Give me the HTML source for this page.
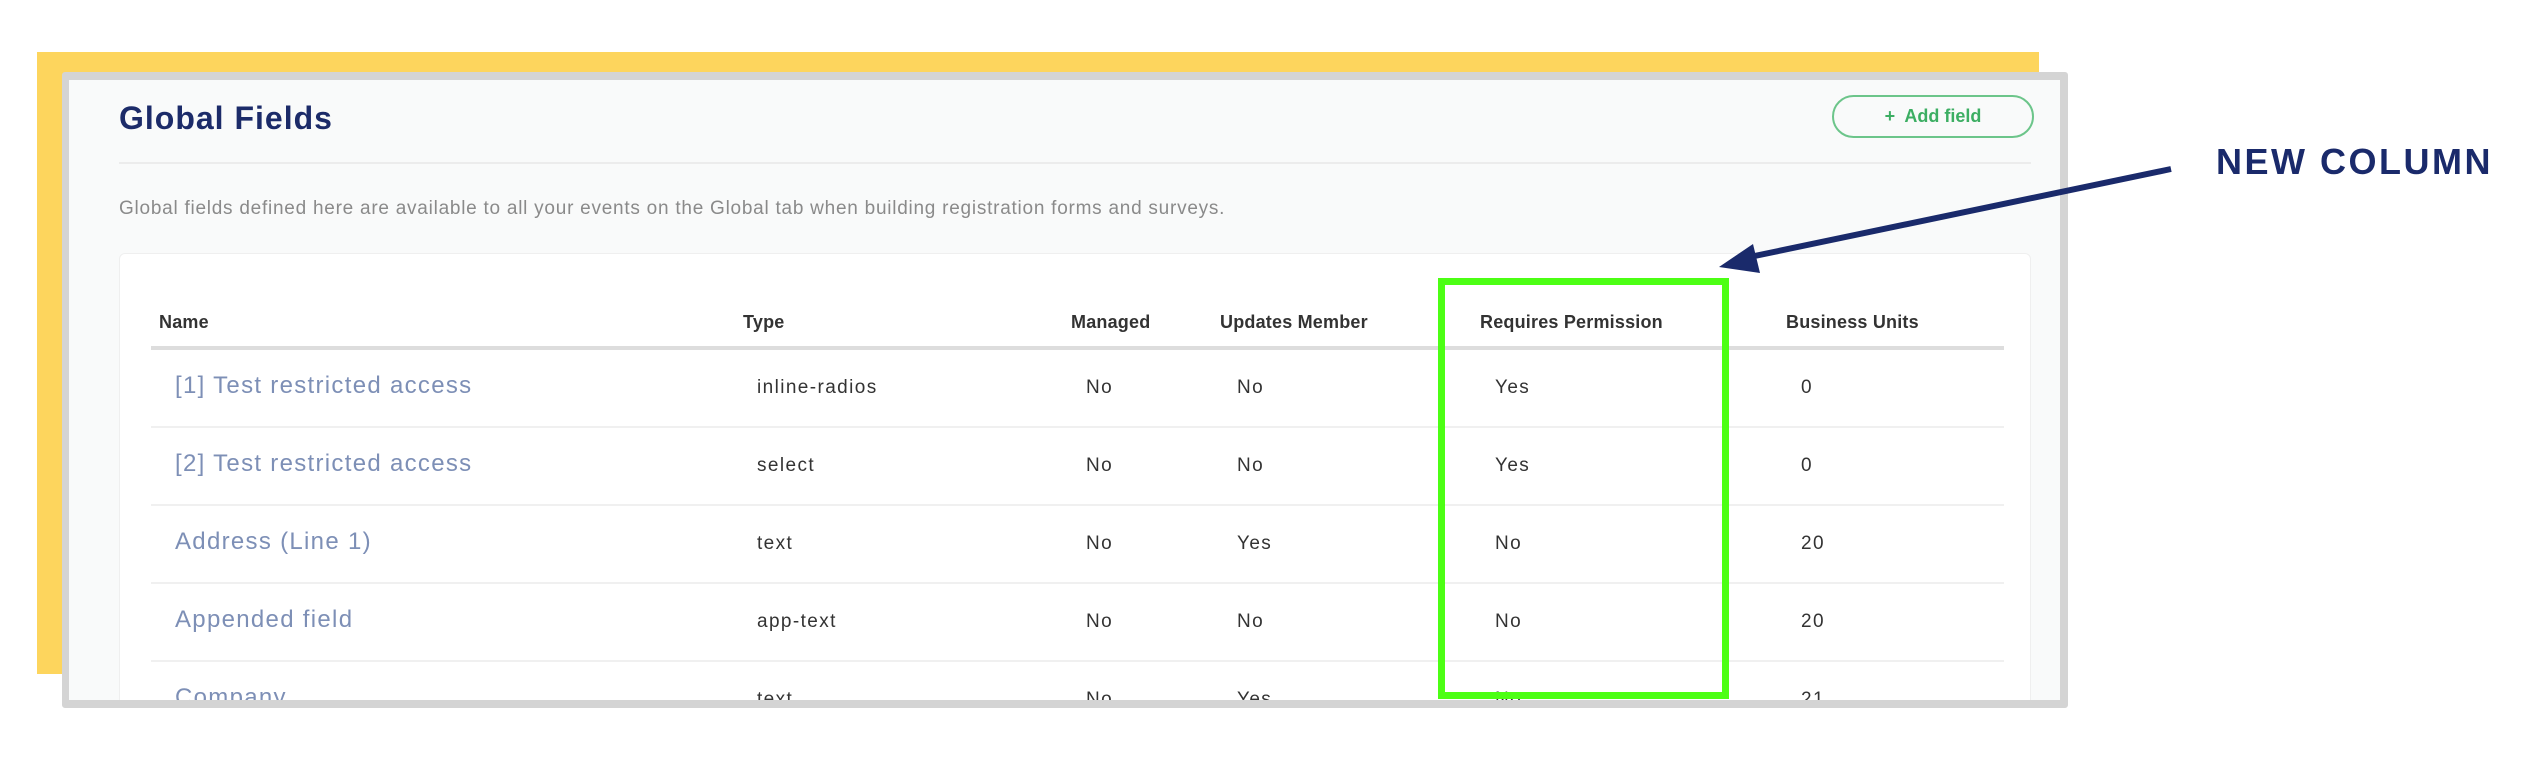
<!DOCTYPE html>
<html><head><meta charset="utf-8"><style>
*{margin:0;padding:0;box-sizing:border-box}
html,body{width:2548px;height:760px;overflow:hidden}
body{background:#fff;position:relative;font-family:"Liberation Sans",sans-serif}
.yel{position:absolute;left:37px;top:52px;width:2002px;height:622px;background:#fdd55d}
.frame{position:absolute;left:62px;top:72px;width:2006px;height:636px;border:8px solid #d4d4d4;border-left-width:7px;background:#f9fafa;overflow:hidden;border-radius:3px}
.in{position:absolute;left:-69px;top:-80px;width:2548px;height:700px}
.t{position:absolute;white-space:nowrap}
.title{left:119px;top:100px;font-size:32px;font-weight:bold;color:#1c2b69;letter-spacing:1px}
.hr{position:absolute;left:119px;top:162px;width:1912px;height:2px;background:#ececec}
.desc{left:119px;top:198px;font-size:19px;color:#8a8a8a;letter-spacing:0.75px}
.btn{position:absolute;left:1832px;top:95px;width:202px;height:43px;border:2px solid #6cc58a;border-radius:22px;color:#3cae63;font-weight:bold;font-size:18px;text-align:center;line-height:39px}
.card{position:absolute;left:119px;top:253px;width:1912px;height:460px;background:#fff;border:1px solid #efefef;border-radius:6px}
.th{top:312px;font-size:18px;font-weight:bold;color:#333;letter-spacing:0.2px}
.hline{position:absolute;left:151px;top:346px;width:1853px;height:4px;background:#ddd}
.rl{position:absolute;left:151px;width:1853px;height:2px;background:#f0f0f0}
.nm{font-size:24px;color:#7d8fb6;letter-spacing:1.3px}
.v{font-size:19px;color:#333;letter-spacing:1.4px}
</style></head><body>
<div class="yel"></div>
<div class="frame"><div class="in">
<div class="t title">Global Fields</div>
<div class="btn">+&nbsp; Add field</div>
<div class="hr"></div>
<div class="t desc">Global fields defined here are available to all your events on the Global tab when building registration forms and surveys.</div>
<div class="card"></div>
<div class="t th" style="left:159px">Name</div>
<div class="t th" style="left:743px">Type</div>
<div class="t th" style="left:1071px">Managed</div>
<div class="t th" style="left:1220px">Updates Member</div>
<div class="t th" style="left:1480px">Requires Permission</div>
<div class="t th" style="left:1786px">Business Units</div>
<div class="hline"></div>
<div class="rl" style="top:426px"></div>
<div class="rl" style="top:504px"></div>
<div class="rl" style="top:582px"></div>
<div class="rl" style="top:660px"></div>

<div class="t nm" style="left:175px;top:372px">[1] Test restricted access</div>
<div class="t v" style="left:757px;top:377px">inline-radios</div>
<div class="t v" style="left:1086px;top:377px">No</div>
<div class="t v" style="left:1237px;top:377px">No</div>
<div class="t v" style="left:1495px;top:377px">Yes</div>
<div class="t v" style="left:1801px;top:377px">0</div>

<div class="t nm" style="left:175px;top:450px">[2] Test restricted access</div>
<div class="t v" style="left:757px;top:455px">select</div>
<div class="t v" style="left:1086px;top:455px">No</div>
<div class="t v" style="left:1237px;top:455px">No</div>
<div class="t v" style="left:1495px;top:455px">Yes</div>
<div class="t v" style="left:1801px;top:455px">0</div>

<div class="t nm" style="left:175px;top:528px">Address (Line 1)</div>
<div class="t v" style="left:757px;top:533px">text</div>
<div class="t v" style="left:1086px;top:533px">No</div>
<div class="t v" style="left:1237px;top:533px">Yes</div>
<div class="t v" style="left:1495px;top:533px">No</div>
<div class="t v" style="left:1801px;top:533px">20</div>

<div class="t nm" style="left:175px;top:606px">Appended field</div>
<div class="t v" style="left:757px;top:611px">app-text</div>
<div class="t v" style="left:1086px;top:611px">No</div>
<div class="t v" style="left:1237px;top:611px">No</div>
<div class="t v" style="left:1495px;top:611px">No</div>
<div class="t v" style="left:1801px;top:611px">20</div>

<div class="t nm" style="left:175px;top:684px">Company</div>
<div class="t v" style="left:757px;top:689px">text</div>
<div class="t v" style="left:1086px;top:689px">No</div>
<div class="t v" style="left:1237px;top:689px">Yes</div>
<div class="t v" style="left:1495px;top:689px">No</div>
<div class="t v" style="left:1801px;top:689px">21</div>
</div></div>
<div style="position:absolute;left:1438px;top:278px;width:291px;height:421px;border:7px solid #4cff14"></div>
<svg style="position:absolute;left:0;top:0" width="2548" height="760">
<line x1="2171" y1="169" x2="1745" y2="258" stroke="#1a2a6b" stroke-width="6"/>
<polygon points="1719,267 1753,244 1760,273" fill="#1a2a6b"/>
</svg>
<div class="t" style="left:2216px;top:141px;font-size:36px;font-weight:bold;color:#1a2a6b;letter-spacing:2.5px">NEW COLUMN</div>
</body></html>
